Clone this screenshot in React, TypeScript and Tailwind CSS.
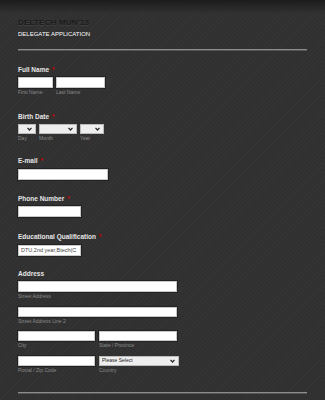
import { ReactNode } from 'react';

const font = { fontFamily: '"Liberation Sans", Arial, sans-serif' };

function Label({ children, req = true }: { children: ReactNode; req?: boolean }) {
  return (
    <div className="text-[6.5px] leading-[9px] font-bold text-[#e6e6e6]">
      {children}
      {req && <span className="ml-[3px] text-[#c00]">*</span>}
    </div>
  );
}

function Sub({ children }: { children: ReactNode }) {
  return <div className="mt-[1px] text-[5px] leading-[6px] text-[#8a8a8a]">{children}</div>;
}

function Box({ w, h = 'h-[11px]', children }: { w: string; h?: string; children?: ReactNode }) {
  return (
    <div className={`${w} ${h} bg-white border border-[#c8c8c8] shadow-[0_0_0_1px_#222] flex items-center px-[2px] text-[5.5px] text-[#444] overflow-hidden`}>
      {children}
    </div>
  );
}

function Chevron() {
  return (
    <svg width="5" height="4" viewBox="0 0 5 4" className="ml-auto shrink-0">
      <path d="M0.5 0.8 L2.5 3 L4.5 0.8" stroke="#222" strokeWidth="1.2" fill="none" />
    </svg>
  );
}

function Select({ w, children }: { w: string; children?: ReactNode }) {
  return (
    <div className={`${w} h-[10px] bg-[#eeeeee] border border-[#bbb] flex items-center px-[2px] pr-[3px] text-[5px] text-[#222]`}>
      {children}
      <Chevron />
    </div>
  );
}

export default function App() {
  return (
    <div
      style={font}
      className="w-[325px] h-[400px] overflow-hidden bg-[#323232] bg-[repeating-linear-gradient(135deg,#343434_0px,#343434_1px,#303030_1px,#303030_3px)] relative"
    >
      {/* top shade */}
      <div className="absolute inset-x-0 top-0 h-[14px] bg-gradient-to-b from-[#1c1c1c] via-[#272727] to-transparent" />

      <div className="relative pl-[18px] pr-[18px] pt-[18px]">
        {/* Header */}
        <div className="text-[8px] leading-[9px] font-bold text-[#1a1a1a] tracking-[0.2px] [text-shadow:0_1px_0_#444]">
          DELTECH MUN'13
        </div>
        <div className="mt-[3px] text-[6px] leading-[8px] text-white">DELEGATE APPLICATION</div>
        <div className="mt-[11px] h-[2px] bg-[#8c8c8c] border-b border-[#555]" />

        {/* Full Name */}
        <div className="mt-[14px]">
          <Label>Full Name</Label>
          <div className="mt-[3px] flex gap-[3px]">
            <div>
              <Box w="w-[35px]" />
              <Sub>First Name</Sub>
            </div>
            <div>
              <Box w="w-[49px]" />
              <Sub>Last Name</Sub>
            </div>
          </div>
        </div>

        {/* Birth Date */}
        <div className="mt-[17px]">
          <Label>Birth Date</Label>
          <div className="mt-[3px] flex gap-[3px]">
            <div>
              <Select w="w-[18px]" />
              <Sub>Day</Sub>
            </div>
            <div>
              <Select w="w-[38px]" />
              <Sub>Month</Sub>
            </div>
            <div>
              <Select w="w-[24px]" />
              <Sub>Year</Sub>
            </div>
          </div>
        </div>

        {/* E-mail */}
        <div className="mt-[15px]">
          <Label>E-mail</Label>
          <div className="mt-[4px]">
            <Box w="w-[90px]" />
          </div>
        </div>

        {/* Phone */}
        <div className="mt-[14px]">
          <Label>Phone Number</Label>
          <div className="mt-[3px]">
            <Box w="w-[63px]" />
          </div>
        </div>

        {/* Education */}
        <div className="mt-[15px]">
          <Label>Educational Qualification</Label>
          <div className="mt-[4px]">
            <Box w="w-[63px]">
              <span className="whitespace-nowrap">DTU,2nd year,Btech(C</span>
            </Box>
          </div>
        </div>

        {/* Address */}
        <div className="mt-[13px]">
          <Label req={false}>Address</Label>
          <div className="mt-[3px]">
            <Box w="w-[159px]" />
            <Sub>Street Address</Sub>
          </div>
          <div className="mt-[8px]">
            <Box w="w-[159px]" h="h-[10px]" />
            <Sub>Street Address Line 2</Sub>
          </div>
          <div className="mt-[7px] flex gap-[4px]">
            <div>
              <Box w="w-[77px]" h="h-[10px]" />
              <Sub>City</Sub>
            </div>
            <div>
              <Box w="w-[78px]" h="h-[10px]" />
              <Sub>State / Province</Sub>
            </div>
          </div>
          <div className="mt-[8px] flex gap-[4px]">
            <div>
              <Box w="w-[77px]" h="h-[10px]" />
              <Sub>Postal / Zip Code</Sub>
            </div>
            <div>
              <Select w="w-[80px]">
                <span className="whitespace-nowrap">Please Select</span>
              </Select>
              <Sub>Country</Sub>
            </div>
          </div>
        </div>

        <div className="mt-[19px] h-[2px] bg-[#8c8c8c] border-b border-[#555]" />
      </div>
    </div>
  );
}
